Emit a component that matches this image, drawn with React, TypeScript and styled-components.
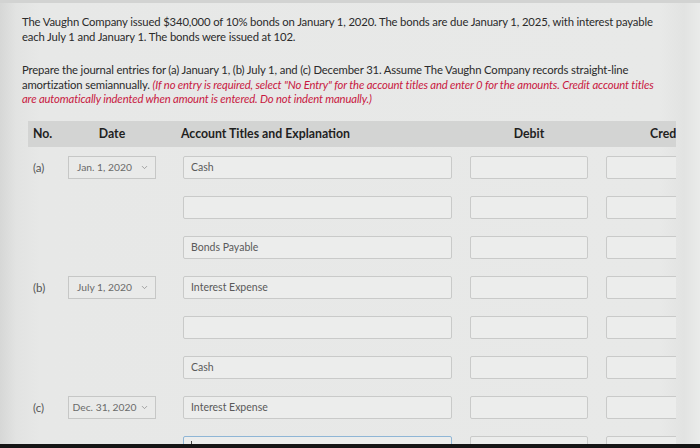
import React from "react";
import styled, { createGlobalStyle } from "styled-components";
import { ChevronDown } from "lucide-react";

const GlobalStyle = createGlobalStyle`
  html, body {
    margin: 0;
    padding: 0;
    background: #e6e7e6;
  }
  body {
    font-family: Lato, "Open Sans", sans-serif;
    color: #2a2a2a;
  }
`;

interface Row {
  no?: string;
  date?: string;
  account: string;
  focused?: boolean;
}

const rows: Row[] = [
  { no: "(a)", date: "Jan. 1, 2020", account: "Cash" },
  { account: "" },
  { account: "Bonds Payable" },
  { no: "(b)", date: "July 1, 2020", account: "Interest Expense" },
  { account: "" },
  { account: "Cash" },
  { no: "(c)", date: "Dec. 31, 2020", account: "Interest Expense" },
  { account: "", focused: true },
];

function App() {
  return (
    <Screen>
      <GlobalStyle />
      <Page>
        <Question>
          The Vaughn Company issued $340,000 of 10% bonds on January 1, 2020. The bonds are due January 1, 2025, with
          interest payable
          <br />
          each July 1 and January 1. The bonds were issued at 102.
        </Question>
        <Question>
          Prepare the journal entries for (a) January 1, (b) July 1, and (c) December 31. Assume The Vaughn Company
          records straight-line
          <br />
          amortization semiannually.{" "}
          <Note>
            (If no entry is required, select "No Entry" for the account titles and enter 0 for the amounts. Credit
            account titles
            <br />
            are automatically indented when amount is entered. Do not indent manually.)
          </Note>
        </Question>

        <Table>
          <HeaderRow>
            <HeadCell>No.</HeadCell>
            <HeadCell $center $width={88}>
              Date
            </HeadCell>
            <HeadCell $shift={-7}>Account Titles and Explanation</HeadCell>
            <HeadCell $center $width={118}>
              Debit
            </HeadCell>
            <HeadCell $center $width={118} $shift={2}>
              Credit
            </HeadCell>
          </HeaderRow>

          {rows.map((row, i) => (
            <EntryRow key={i}>
              <NoCell>{row.no}</NoCell>
              <div>
                {row.date && (
                  <DateSelect>
                    <span>{row.date}</span>
                    <ChevronDown size={9} strokeWidth={2} color="#8a8a8a" />
                  </DateSelect>
                )}
              </div>
              <Field $width={269} $focused={row.focused}>
                {row.account}
                {row.focused && <Caret />}
              </Field>
              <Field $width={118} />
              <Field $width={118} />
            </EntryRow>
          ))}
        </Table>
      </Page>
      <Bezel />
    </Screen>
  );
}

const Screen = styled.div`
  height: 448px;
  display: flex;
  flex-direction: column;
  overflow: hidden;
  background: linear-gradient(
      90deg,
      #d6d7d6 0px,
      #e2e3e2 16px,
      #e7e8e7 40px,
      #e8e9e8 660px,
      #e2e3e2 684px,
      #eaebea 700px
    );
`;

const Page = styled.div`
  flex: 1;
  overflow: hidden;
  padding: 12px 0 0 22px;
  border-top: 3px solid #d2d3d2;
`;

const Question = styled.p`
  margin: 0 0 19px;
  font-size: 11.3px;
  letter-spacing: -0.15px;
  line-height: 14.5px;
  white-space: nowrap;
  color: #2b2b2b;

  &:last-of-type {
    margin-bottom: 14px;
  }
`;

const Note = styled.em`
  color: #c8183f;
  font-style: italic;
`;

const Table = styled.div`
  width: 648px;
  margin-left: 6px;
  overflow: hidden;
`;

const HeaderRow = styled.div`
  display: grid;
  grid-template-columns: 40px 115px 287px 136px 1fr;
  align-items: center;
  height: 26px;
  background: #d3d4d3;
  margin-bottom: 9px;
`;

const HeadCell = styled.div<{ $center?: boolean; $width?: number; $shift?: number }>`
  font-size: 12.3px;
  font-weight: 700;
  color: #1f1f1f;
  white-space: nowrap;
  padding-left: ${(p) => (p.$center ? 0 : 5)}px;
  margin-left: ${(p) => p.$shift ?? 0}px;
  text-align: ${(p) => (p.$center ? "center" : "left")};
  width: ${(p) => (p.$width ? `${p.$width}px` : "auto")};
`;

const EntryRow = styled.div`
  display: grid;
  grid-template-columns: 40px 115px 287px 136px 1fr;
  align-items: center;
  height: 23px;
  margin-bottom: 17px;
`;

const NoCell = styled.div`
  padding-left: 5px;
  font-size: 11.5px;
  color: #555;
`;

const DateSelect = styled.div`
  width: 88px;
  height: 23px;
  box-sizing: border-box;
  display: flex;
  align-items: center;
  padding-right: 6px;
  border: 1px solid #c6c7c6;
  background: #e9eae9;
  font-size: 10.3px;
  color: #6a6a6a;

  span {
    flex: 1;
    text-align: center;
    white-space: nowrap;
  }
`;

const Field = styled.div<{ $width: number; $focused?: boolean }>`
  width: ${(p) => p.$width}px;
  height: 23px;
  box-sizing: border-box;
  display: flex;
  align-items: center;
  padding-left: 7px;
  border: 1px solid ${(p) => (p.$focused ? "#8fb6d6" : "#c9cac9")};
  border-radius: 2px;
  background: #ecedec;
  font-size: 10.5px;
  color: #5a5a5a;
`;

const Caret = styled.span`
  display: inline-block;
  width: 1px;
  height: 12px;
  background: #444;
`;

const Bezel = styled.div`
  height: 4px;
  flex-shrink: 0;
  background: #151515;
`;

export default App;
